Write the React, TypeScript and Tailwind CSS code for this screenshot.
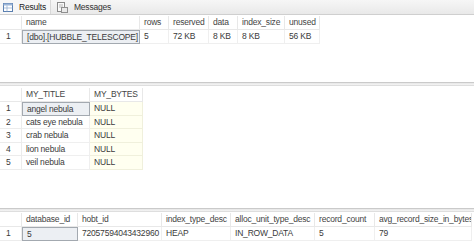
import React from "react";

type Col = { title: string; w: number; bg?: string };

function ResultGrid({ cols, rows, selected = 0 }: { cols: Col[]; rows: string[][]; selected?: number }) {
  return (
    <div className="flex flex-col">
      {/* header */}
      <div className="flex h-[14px] items-center">
        <div className="w-[22px] h-full border-r border-b border-[#e8e8e8]" />
        {cols.map((c) => (
          <div
            key={c.title}
            style={{ width: c.w }}
            className="h-full flex items-center pl-[4px] border-r border-b border-[#e8e8e8] text-[#444] whitespace-nowrap overflow-hidden"
          >
            {c.title}
          </div>
        ))}
      </div>
      {rows.map((r, i) => (
        <div key={i} className="flex h-[13.5px] items-center">
          <div className="w-[22px] h-full flex items-center pl-[6px] border-r border-b border-[#ececec] text-[#3a3a3a]">
            {i + 1}
          </div>
          {r.map((v, j) => {
            const sel = i === 0 && j === selected;
            return (
              <div
                key={j}
                style={{ width: cols[j].w }}
                className={
                  "h-full flex items-center pl-[4px] whitespace-nowrap overflow-hidden text-[#3a3a3a] " +
                  (sel
                    ? "bg-[#eceff3] border border-[#a3a9b0]"
                    : cols[j].bg === "yellow"
                    ? "bg-[#fffff0] border-r border-b border-[#f0f0dc]"
                    : "border-r border-b border-[#efefef]")
                }
              >
                {v}
              </div>
            );
          })}
        </div>
      ))}
    </div>
  );
}

function Splitter() {
  return (
    <div className="h-[4px] border-t border-[#cacaca] bg-gradient-to-b from-[#e6e6e6] to-[#f4f4f4] border-b border-b-[#dedede]" />
  );
}

export default function App() {
  return (
    <div
      className="w-[474px] h-[241px] bg-white overflow-hidden flex flex-col text-[8.5px] tracking-[-0.2px] leading-none"
      style={{ fontFamily: '"Liberation Sans", Arial, sans-serif' }}
    >
      {/* Tabs */}
      <div className="h-[15px] flex items-end bg-gradient-to-b from-[#f6f6f6] to-[#e9e9e9] border-b border-[#cfcfcf] shrink-0">
        <div className="h-[14px] flex items-center gap-[6px] pl-[3px] pr-[4px] bg-[#f7f7f7] border-r border-[#d8d8d8]">
          <svg width="10" height="9" viewBox="0 0 10 9">
            <rect x="0.5" y="0.5" width="9" height="8" fill="#fff" stroke="#5a7fb0" />
            <rect x="0.5" y="0.5" width="9" height="2" fill="#9cb6d8" />
            <line x1="0.5" y1="5" x2="9.5" y2="5" stroke="#8aa6cc" strokeWidth="0.7" />
            <line x1="4" y1="2.5" x2="4" y2="8.5" stroke="#8aa6cc" strokeWidth="0.7" />
          </svg>
          <span className="text-[#222]">Results</span>
        </div>
        <div className="h-[14px] flex items-center gap-[6px] pl-[6px] pr-[4px]">
          <svg width="11" height="11" viewBox="0 0 11 11">
            <rect x="0.5" y="0.5" width="7" height="9" fill="#fafafa" stroke="#8a8a8a" />
            <line x1="2" y1="3" x2="6" y2="3" stroke="#9a9a9a" strokeWidth="0.7" />
            <line x1="2" y1="5" x2="6" y2="5" stroke="#9a9a9a" strokeWidth="0.7" />
            <rect x="4.5" y="5.5" width="6" height="5" fill="#e9e9e9" stroke="#8f8f8f" />
          </svg>
          <span className="text-[#333]">Messages</span>
        </div>
      </div>

      {/* Grid 1 */}
      <div className="pt-[1px] h-[67px] shrink-0">
        <ResultGrid
          cols={[
            { title: "name", w: 118 },
            { title: "rows", w: 29 },
            { title: "reserved", w: 40 },
            { title: "data", w: 29 },
            { title: "index_size", w: 47 },
            { title: "unused", w: 35 },
          ]}
          rows={[["[dbo].[HUBBLE_TELESCOPE]", "5", "72 KB", "8 KB", "8 KB", "56 KB"]]}
        />
      </div>

      <Splitter />

      {/* Grid 2 */}
      <div className="pt-[2px] h-[122px] shrink-0">
        <ResultGrid
          cols={[
            { title: "MY_TITLE", w: 68 },
            { title: "MY_BYTES", w: 53, bg: "yellow" },
          ]}
          rows={[
            ["angel nebula", "NULL"],
            ["cats eye nebula", "NULL"],
            ["crab nebula", "NULL"],
            ["lion nebula", "NULL"],
            ["veil nebula", "NULL"],
          ]}
        />
      </div>

      <Splitter />

      {/* Grid 3 */}
      <div className="pt-[1px]">
        <ResultGrid
          cols={[
            { title: "database_id", w: 56 },
            { title: "hobt_id", w: 84 },
            { title: "index_type_desc", w: 69 },
            { title: "alloc_unit_type_desc", w: 84 },
            { title: "record_count", w: 60 },
            { title: "avg_record_size_in_bytes", w: 97 },
          ]}
          rows={[["5", "72057594043432960", "HEAP", "IN_ROW_DATA", "5", "79"]]}
        />
      </div>
    </div>
  );
}
